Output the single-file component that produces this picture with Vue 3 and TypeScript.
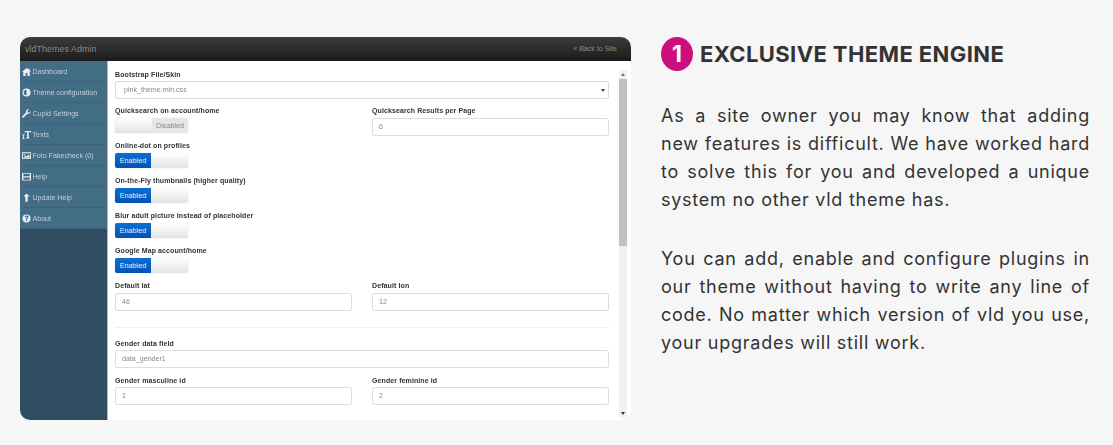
<script setup lang="ts">
interface NavItem { label: string; icon: string }
const nav: NavItem[] = [
  { label: 'Dashboard', icon: 'M5 1 0 5.5h1.4V10h2.6V6.8h2V10h2.6V5.5H10L8.4 4V1.6H7.2v1.3Z' },
  { label: 'Theme configuration', icon: 'M5 .5a4.5 4.5 0 1 0 0 9 4.5 4.5 0 0 0 0-9Zm0 1.4v6.2a3.1 3.1 0 0 1 0-6.2Z' },
  { label: 'Cupid Settings', icon: 'M9.6 2.4 7.8 4.1 6.4 3.7 6 2.3 7.7.5C6.3 0 4.6.9 4.4 2.4c0 .5 0 .9.2 1.3L.4 8c-.5.5-.5 1 0 1.4.4.4 1 .4 1.4 0l4.2-4.2c.4.2.9.2 1.4.1 1.5-.3 2.4-1.500 2.200-2.900Z' },
  { label: 'Texts', icon: 'M3 1h7v2H9.200L9 2.200H7.400V8l.8.4V9.500H4.800V8.400L5.600 8V2.200H4L3.800 3H3ZM.2 5h3v.8H2.200v3.400h1V10H.2v-.8h1V5.800H.2Z' },
  { label: 'Foto Fakecheck (0)', icon: 'M0 1.500h10v7.500H0Zm1 1v5.500h8V2.500Zm1.500.8a.9.9 0 1 1 0 1.800.9.9 0 0 1 0-1.800ZM1.500 7.500 4 5l1.200 1.200L7 4l1.500 1.800v1.700Z' },
  { label: 'Help', icon: 'M0 1h10v8.500H0Zm1.500 1v2.800h7V2ZM1.500 6v2.500h7V6Z' },
  { label: 'Update Help', icon: 'M5 .5 8.500 4H6.300v5.800H3.700V4H1.500Z' },
  { label: 'About', icon: 'M5 .5a4.500 4.500 0 1 0 0 9 4.500 4.500 0 0 0 0-9Zm.8 7.300H4.200V6.500h1.600ZM6.300 4.700c-.5.4-.6.5-.6 1H4.300c0-1 .3-1.300.9-1.700.4-.3.5-.4.5-.6 0-.3-.3-.4-.7-.4-.5 0-.9.200-1.300.6l-.8-1C3.500 2 4.300 1.700 5.100 1.700c1.300 0 2.100.6 2.100 1.600 0 .6-.3 1-.9 1.400Z' }
]
const toggles: string[] = ['Online-dot on profiles', 'On-the-Fly thumbnails (higher quality)', 'Blur adult picture instead of placeholder', 'Google Map account/home']
</script>

<template>
  <main class="page">
    <section class="window">
      <header class="topbar">
        <span class="brand">vldThemes Admin</span>
        <span class="back">« Back to Site</span>
      </header>
      <div class="body">
        <nav class="side">
          <a v-for="item in nav" :key="item.label" class="nav-item">
            <svg viewBox="0 0 10 10" width="9" height="9" aria-hidden="true"><path :d="item.icon" fill-rule="evenodd" /></svg>
            <span>{{ item.label }}</span>
          </a>
        </nav>
        <form class="form" @submit.prevent>
          <div class="field">
            <label>Bootstrap File/Skin</label>
            <div class="input select"><span class="pad">pink_theme.min.css</span><i class="caret"></i></div>
          </div>
          <div class="grid quick">
            <div class="field wide-gap">
              <label>Quicksearch on account/home</label>
              <div class="switch off"><span class="blank"></span><span class="state">Disabled</span></div>
            </div>
            <div class="field wide-gap">
              <label>Quicksearch Results per Page</label>
              <div class="input">6</div>
            </div>
          </div>
          <div v-for="t in toggles" :key="t" class="field toggle-field wide-gap">
            <label>{{ t }}</label>
            <div class="switch"><span class="state on">Enabled</span><span class="blank"></span></div>
          </div>
          <div class="grid coords">
            <div class="field wide-gap"><label>Default lat</label><div class="input">46</div></div>
            <div class="field wide-gap"><label>Default lon</label><div class="input">12</div></div>
          </div>
          <hr />
          <div class="field"><label>Gender data field</label><div class="input">data_gender1</div></div>
          <div class="grid gender">
            <div class="field"><label>Gender masculine id</label><div class="input">1</div></div>
            <div class="field"><label>Gender feminine id</label><div class="input">2</div></div>
          </div>
        </form>
        <div class="scroll">
          <i class="arrow up"></i>
          <div class="thumb"></div>
          <i class="arrow down"></i>
        </div>
      </div>
    </section>
    <article class="copy">
      <h1><span class="badge">1</span>EXCLUSIVE THEME ENGINE</h1>
      <p>As a site owner you may know that adding new features is difficult. We have worked hard to solve this for you and developed a unique system no other vld theme has.</p>
      <p>You can add, enable and configure plugins in our theme without having to write any line of code. No matter which version of vld you use, your upgrades will still work.</p>
    </article>
  </main>
</template>

<style>
html, body { margin: 0; background: #f6f6f6; }
</style>

<style scoped>
.page {
  display: flex;
  align-items: flex-start;
  width: 1113px;
  height: 445px;
  box-sizing: border-box;
  padding: 37px 23px 0 20px;
  background: #f6f6f6;
  overflow: hidden;
}
.window {
  width: 611px;
  height: 383px;
  flex: none;
  display: flex;
  flex-direction: column;
  border-radius: 10px;
  overflow: hidden;
  background: #fff;
  font-family: "Liberation Sans", Arial, sans-serif;
  filter: blur(0.35px);
}
.topbar {
  height: 24px;
  flex: none;
  display: flex;
  align-items: center;
  justify-content: space-between;
  padding: 0 14px 0 5px;
  background: linear-gradient(#3c3c3c, #1b1b1b);
  color: #8a8a8a;
  font-size: 7.1px;
}
.brand { font-size: 8.8px; letter-spacing: 0.1px; }
.body { flex: 1; min-height: 0; display: flex; }
.side {
  width: 87px;
  flex: none;
  background: #2f4d60;
  border-right: 1px solid #a9bcc8;
  display: flex;
  flex-direction: column;
}
.nav-item {
  height: 21px;
  box-sizing: border-box;
  display: flex;
  align-items: center;
  gap: 1.5px;
  padding-left: 2px;
  padding-top: 1px;
  background: #436c85;
  border-bottom: 1px solid #3d6178;
  color: #c3d0d8;
  font-size: 7.1px;
  white-space: nowrap;
}
.nav-item svg { fill: #e8eef1; flex: none; }
.form {
  flex: 1;
  min-width: 0;
  box-sizing: border-box;
  padding: 8px 10px 0 7px;
  overflow: hidden;
}
.field { display: flex; flex-direction: column; }
label {
  height: 11px;
  line-height: 11px;
  margin-bottom: 1px;
  font-size: 7px;
  font-weight: 700;
  letter-spacing: 0.1px;
  color: #333;
  white-space: nowrap;
}
.wide-gap label { margin-bottom: 2px; }
.input {
  height: 18px;
  box-sizing: border-box;
  display: flex;
  align-items: center;
  padding: 0 6px;
  border: 1px solid #dedede;
  border-radius: 2px;
  background: #fff;
  color: #888;
  font-size: 7.1px;
}
.select { justify-content: space-between; }
.pad { padding-left: 2px; }
.caret {
  border: 2px solid transparent;
  border-top: 3px solid #444;
  border-bottom: 0;
  margin-right: -3px;
}
.grid {
  display: grid;
  grid-template-columns: 237px 237px;
  column-gap: 20px;
  margin-top: 6px;
}
.quick { height: 28px; }
.coords { margin-top: 7px; }
.toggle-field { margin-top: 7px; }
.switch {
  width: 73px;
  height: 15px;
  display: flex;
  border-radius: 2px;
  overflow: hidden;
  box-shadow: 0 0 1px #bbb;
  font-size: 7.2px;
}
.blank { flex: 1; background: linear-gradient(#fff, #e3e3e3); }
.state {
  width: 36px;
  display: flex;
  align-items: center;
  justify-content: center;
  background: #e6e6e6;
  color: #8c8c8c;
}
.state.on { background: linear-gradient(#0a6fd0, #0352b8); color: #e4eefa; }
hr { border: 0; border-top: 1px solid #f0f0f0; margin: 16px 0 10px; }
.gender { margin-top: 7px; }
.scroll {
  width: 8px;
  flex: none;
  margin: 9px 4px 3px 0;
  background: #f1f1f1;
  display: flex;
  flex-direction: column;
  align-items: center;
}
.thumb { align-self: stretch; height: 167px; background: #c1c1c1; margin-top: 3px; }
.arrow { width: 0; height: 0; border: 2px solid transparent; }
.arrow.up { border-top: 0; border-bottom: 3px solid #777; margin-top: 3px; }
.arrow.down { border-bottom: 0; border-top: 3px solid #333; margin-top: auto; margin-bottom: 2px; }
.copy {
  margin-left: 30px;
  width: 429px;
  flex: none;
  font-family: Inter, "Noto Sans", sans-serif;
  color: #333;
}
h1 {
  display: flex;
  align-items: center;
  gap: 7px;
  height: 34px;
  margin: 0 0 31px;
  font-size: 22px;
  font-weight: 700;
  letter-spacing: 0.4px;
  white-space: nowrap;
}
.badge {
  width: 32px;
  height: 34px;
  flex: none;
  border-radius: 50%;
  display: flex;
  align-items: center;
  justify-content: center;
  background: #cb0f7c;
  color: #fff;
  font-size: 23px;
  letter-spacing: 0;
}
p {
  margin: 0 0 31px;
  font-size: 18px;
  line-height: 28px;
  letter-spacing: 0.75px;
  text-align: justify;
}
</style>
